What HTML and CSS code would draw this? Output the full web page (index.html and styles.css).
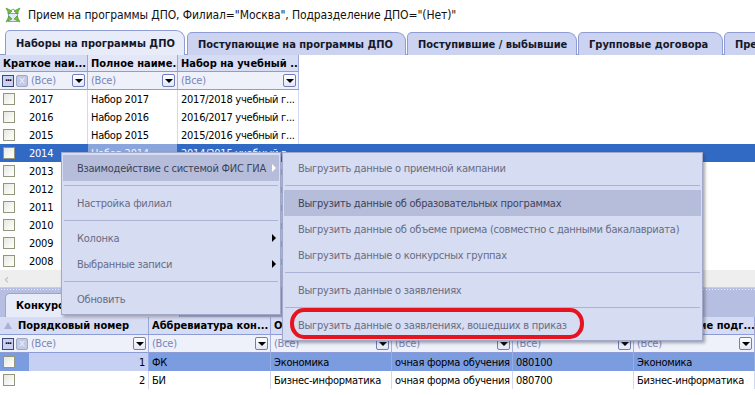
FILE: index.html
```html
<!DOCTYPE html>
<html lang="ru">
<head>
<meta charset="utf-8">
<title>Прием на программы ДПО</title>
<link rel="stylesheet" href="styles.css">
</head>
<body>
<div class="app">
  <div class="title">
    <svg class="logo" width="16" height="16" viewBox="0 0 16 16">
      <rect x="3.5" y="6.5" width="9" height="8" fill="#e3e8f6" stroke="#8c9cc6"/>
      <path d="M2 6.5 L8 2 L14 6.5" fill="none" stroke="#8c9cc6"/>
      <polygon points="1,1 7,4 4,7" fill="#6cc23a" stroke="#3f8f1f" stroke-width="0.6"/>
      <polygon points="15,1 9,4 12,7" fill="#6cc23a" stroke="#3f8f1f" stroke-width="0.6"/>
      <polygon points="1,15 7,12 4,9" fill="#6cc23a" stroke="#3f8f1f" stroke-width="0.6"/>
      <polygon points="15,15 9,12 12,9" fill="#6cc23a" stroke="#3f8f1f" stroke-width="0.6"/>
    </svg>
    <span class="title-text">Прием на программы ДПО, Филиал="Москва", Подразделение ДПО="(Нет)"</span>
  </div>

  <div class="tabs">
    <div class="tab active t1">Наборы на программы ДПО</div>
    <div class="tab t2">Поступающие на программы ДПО</div>
    <div class="tab t3">Поступившие / выбывшие</div>
    <div class="tab t4">Групповые договора</div>
    <div class="tab t5">Преподаватели</div>
  </div>

  <div class="grid top-grid">
    <div class="hrow cols-top">
      <div class="hc">Краткое наи...</div>
      <div class="hc hover">Полное наиме...</div>
      <div class="hc">Набор на учебный ...</div>
    </div>
    <div class="frow cols-top">
      <div class="fc"><span class="btn-dots">&middot;&middot;&middot;</span><span class="btn-clear">&times;</span><span class="all">(Все)</span><span class="dd"></span></div>
      <div class="fc"><span class="all">(Все)</span><span class="dd"></span></div>
      <div class="fc"><span class="all">(Все)</span><span class="dd"></span></div>
    </div>
    <div class="row cols-top"><div class="c c1"><span class="cb"></span><span class="v">2017</span></div><div class="c">Набор 2017</div><div class="c">2017/2018 учебный г...</div></div>
    <div class="row cols-top"><div class="c c1"><span class="cb"></span><span class="v">2016</span></div><div class="c">Набор 2016</div><div class="c">2016/2017 учебный г...</div></div>
    <div class="row cols-top"><div class="c c1"><span class="cb"></span><span class="v">2015</span></div><div class="c">Набор 2015</div><div class="c">2015/2016 учебный г...</div></div>
    <div class="row cols-top sel"><div class="c c1"><span class="cb"></span><span class="v">2014</span></div><div class="c focus">Набор 2014</div><div class="c">2014/2015 учебный г...</div></div>
    <div class="row cols-top"><div class="c c1"><span class="cb"></span><span class="v">2013</span></div><div class="c">Набор 2013</div><div class="c">2013/2014 учебный г...</div></div>
    <div class="row cols-top"><div class="c c1"><span class="cb"></span><span class="v">2012</span></div><div class="c">Набор 2012</div><div class="c">2012/2013 учебный г...</div></div>
    <div class="row cols-top"><div class="c c1"><span class="cb"></span><span class="v">2011</span></div><div class="c">Набор 2011</div><div class="c">2011/2012 учебный г...</div></div>
    <div class="row cols-top"><div class="c c1"><span class="cb"></span><span class="v">2010</span></div><div class="c">Набор 2010</div><div class="c">2010/2011 учебный г...</div></div>
    <div class="row cols-top"><div class="c c1"><span class="cb"></span><span class="v">2009</span></div><div class="c">Набор 2009</div><div class="c">2009/2010 учебный г...</div></div>
    <div class="row cols-top"><div class="c c1"><span class="cb"></span><span class="v">2008</span></div><div class="c">Набор 2008</div><div class="c">2008/2009 учебный г...</div></div>
    <div class="hscroll"><span class="arr">&lsaquo;</span></div>
  </div>

  <div class="lower">
    <div class="splitter"></div>
    <div class="tabs2">
      <div class="tab2">Конкурсные группы</div>
    </div>
  </div>

  <div class="grid bottom-grid">
    <div class="hrow cols-bot">
      <div class="hc"><span class="sort"></span>Порядковый номер</div>
      <div class="hc">Аббревиатура кон...</div>
      <div class="hc">Образовательная...</div>
      <div class="hc">Форма обучения</div>
      <div class="hc">Код направления</div>
      <div class="hc">Направление подг...</div>
    </div>
    <div class="frow cols-bot">
      <div class="fc"><span class="btn-dots">&middot;&middot;&middot;</span><span class="btn-clear">&times;</span><span class="all">(Все)</span><span class="dd"></span></div>
      <div class="fc"><span class="all">(Все)</span><span class="dd"></span></div>
      <div class="fc"><span class="all">(Все)</span><span class="dd"></span></div>
      <div class="fc"><span class="all">(Все)</span><span class="dd"></span></div>
      <div class="fc"><span class="all">(Все)</span><span class="dd"></span></div>
      <div class="fc"><span class="all">(Все)</span><span class="dd"></span></div>
    </div>
    <div class="row cols-bot sel2"><div class="c c1"><span class="cb"></span><span class="v num focus2">1</span></div><div class="c">ФК</div><div class="c">Экономика</div><div class="c">очная форма обучения</div><div class="c">080100</div><div class="c">Экономика</div></div>
    <div class="row cols-bot"><div class="c c1"><span class="cb"></span><span class="v num">2</span></div><div class="c">БИ</div><div class="c">Бизнес-информатика</div><div class="c">очная форма обучения</div><div class="c">080700</div><div class="c">Бизнес-информатика</div></div>
  </div>
</div>

<div class="menu main-menu">
  <div class="item hl"><span>Взаимодействие с системой ФИС ГИА</span><span class="arrow white"></span></div>
  <div class="sep"></div>
  <div class="item"><span>Настройка филиал</span></div>
  <div class="sep"></div>
  <div class="item"><span>Колонка</span><span class="arrow"></span></div>
  <div class="item"><span>Выбранные записи</span><span class="arrow"></span></div>
  <div class="sep"></div>
  <div class="item"><span>Обновить</span></div>
</div>

<div class="menu sub-menu">
  <div class="item"><span>Выгрузить данные о приемной кампании</span></div>
  <div class="sep"></div>
  <div class="item hl"><span>Выгрузить данные об образовательных программах</span></div>
  <div class="item"><span>Выгрузить данные об объеме приема (совместно с данными бакалавриата)</span></div>
  <div class="item"><span>Выгрузить данные о конкурсных группах</span></div>
  <div class="sep"></div>
  <div class="item"><span>Выгрузить данные о заявлениях</span></div>
  <div class="sep"></div>
  <div class="item"><span>Выгрузить данные о заявлениях, вошедших в приказ</span></div>
</div>

<div class="redmark"></div>
</body>
</html>
```

FILE: styles.css
```css
* { box-sizing: border-box; }
html, body { margin: 0; padding: 0; }
body {
  width: 755px;
  height: 395px;
  overflow: hidden;
  position: relative;
  background: #ffffff;
  font-family: "DejaVu Sans Condensed", "DejaVu Sans", sans-serif;
  font-size: 11px;
  letter-spacing: -0.25px;
  color: #000;
}
.app { display: flex; flex-direction: column; width: 755px; }

.title {
  height: 30px;
  display: flex;
  align-items: center;
  padding-left: 5px;
  gap: 7px;
}
.logo { flex: none; }
.title-text { font-size: 12px; letter-spacing: -0.1px; color: #111; }

.tabs {
  height: 25px;
  display: flex;
  align-items: flex-end;
  padding-left: 5px;
  border-bottom: 1px solid #8d9ad2;
}
.tab {
  height: 23px;
  display: flex;
  align-items: center;
  padding-left: 10px;
  font-weight: bold;
  letter-spacing: 0;
  white-space: nowrap;
  overflow: hidden;
  background: #cbd3f0;
  border: 1px solid #8f9cd3;
  border-bottom: none;
  border-radius: 5px 9px 0 0;
  color: #15172a;
  flex: none;
  margin-bottom: -1px;
}
.tab.active { background: #e8ebf8; height: 25px; }
.t1 { width: 180px; }
.t2 { width: 219px; margin-left: 2px; }
.t3 { width: 170px; margin-left: 1px; }
.t4 { width: 145px; margin-left: 1px; }
.t5 { width: 40px; margin-left: 1px; }

.grid { display: flex; flex-direction: column; }
.cols-top { display: grid; grid-template-columns: 88px 90px 121px 1fr; }
.cols-bot { display: grid; grid-template-columns: 149px 122px 121px 121px 121px 1fr; }

.hrow { height: 17px; }
.hc {
  background: #d6dcf4;
  border-right: 1px solid #9aa6da;
  border-bottom: 1px solid #8d9bd6;
  font-weight: bold;
  letter-spacing: 0;
  padding-left: 3px;
  display: flex;
  align-items: center;
  white-space: nowrap;
  overflow: hidden;
}
.hc.hover { background: #e3e7f8; }

.frow { height: 18px; }
.fc {
  background: #eef0fa;
  border-right: 1px solid #a7b1de;
  border-bottom: 1px solid #8d9bd6;
  display: flex;
  align-items: center;
  padding: 0 2px 0 2px;
  gap: 2px;
}
.all { color: #7a86b6; flex: 1; padding-left: 1px; }
.btn-dots {
  width: 12px; height: 12px;
  border: 1px solid #3c4a7a;
  background: #c9d2f0;
  font-size: 9px; line-height: 8px;
  text-align: center; font-weight: bold;
  letter-spacing: -1px;
  color: #000;
}
.btn-clear {
  width: 12px; height: 12px;
  border: 1px solid #a0a8c8;
  background: #c2c9e4;
  color: #eef;
  font-size: 10px; line-height: 10px;
  text-align: center;
  border-radius: 2px;
}
.dd {
  width: 13px; height: 13px;
  border: 1px solid #6f7eb8;
  background: linear-gradient(#ffffff, #e3e7f5);
  border-radius: 2px;
  position: relative;
  flex: none;
}
.dd::after {
  content: "";
  position: absolute;
  left: 2px; top: 4px;
  border-left: 4px solid transparent;
  border-right: 4px solid transparent;
  border-top: 4px solid #000;
}

.row { height: 18px; }
.c {
  border-right: 1px solid #d3d9f2;
  padding-left: 3px;
  display: flex;
  align-items: center;
  white-space: nowrap;
  overflow: hidden;
}
.c1 { padding-left: 0; }
.cb {
  width: 12px; height: 12px;
  margin: 0 14px 0 3px;
  border: 1px solid #93967a;
  background: linear-gradient(135deg, #e8e8e0, #ffffff);
  flex: none;
}
.v { flex: 1; }
.num {
  padding-right: 3px;
  height: 100%;
  display: flex;
  align-items: center;
  justify-content: flex-end;
}
.sel { background: #316ac5; color: #fff; }
.sel .c { border-right-color: #316ac5; }
.sel .focus { background: #8aa4dc; color: #f4f6ff; }
.sel2 { background: #7c9ce0; }
.sel2 .c { border-right-color: #93aee6; }
.focus2 { background: #c6d0f2; }

.hscroll {
  height: 17px;
  background: #eeeeee;
  display: flex;
  align-items: center;
  padding-left: 4px;
}
.arr { color: #b8b8b8; font-size: 14px; }

.lower { background: #b6bee2; display: flex; flex-direction: column; }
.splitter {
  height: 5px;
  border-top: 1px solid #c8cdea;
  background-image: radial-gradient(circle, #eef0fb 0.7px, transparent 0.8px);
  background-size: 3px 3px;
  background-position: 0 0;
  background-repeat: repeat-x;
}
.tabs2 { height: 25px; display: flex; align-items: flex-end; padding-left: 5px; }
.tab2 {
  width: 175px;
  height: 24px;
  background: #e8ebf8;
  border: 1px solid #98a4d6;
  border-bottom: none;
  border-radius: 5px 9px 0 0;
  padding-left: 10px;
  display: flex;
  align-items: center;
  font-weight: bold;
  letter-spacing: 0;
  white-space: nowrap;
  overflow: hidden;
}
.bottom-grid .hrow { height: 18px; }
.sort {
  width: 0; height: 0;
  border-left: 4px solid transparent;
  border-right: 4px solid transparent;
  border-bottom: 7px solid #a9b2d6;
  margin: 0 6px 0 1px;
  flex: none;
}

.menu {
  position: absolute;
  background: #d6dcf2;
  border: 1px solid #a1a9cb;
  box-shadow: 2px 2px 3px rgba(60, 60, 70, 0.45);
  padding: 2px 1px;
  display: flex;
  flex-direction: column;
}
.main-menu { left: 61px; top: 152px; width: 220px; }
.sub-menu { left: 282px; top: 152px; width: 421px; }
.item {
  height: 26px;
  display: flex;
  align-items: center;
  justify-content: space-between;
  padding: 0 3px 0 14px;
  color: #686c84;
  white-space: nowrap;
}
.item.hl { background: #b6bddb; color: #3f4359; }
.sep { height: 9px; display: flex; align-items: center; padding: 0 1px; }
.sep::after { content: ""; flex: 1; height: 1px; background: #abb3d5; }
.arrow {
  width: 0; height: 0;
  border-top: 4px solid transparent;
  border-bottom: 4px solid transparent;
  border-left: 4px solid #000;
}
.arrow.white { border-left-color: #ffffff; }

.redmark {
  position: absolute;
  left: 290px;
  top: 308px;
  width: 294px;
  height: 31px;
  border: 4px solid #e6141e;
  border-radius: 14px / 15px;
}
```
